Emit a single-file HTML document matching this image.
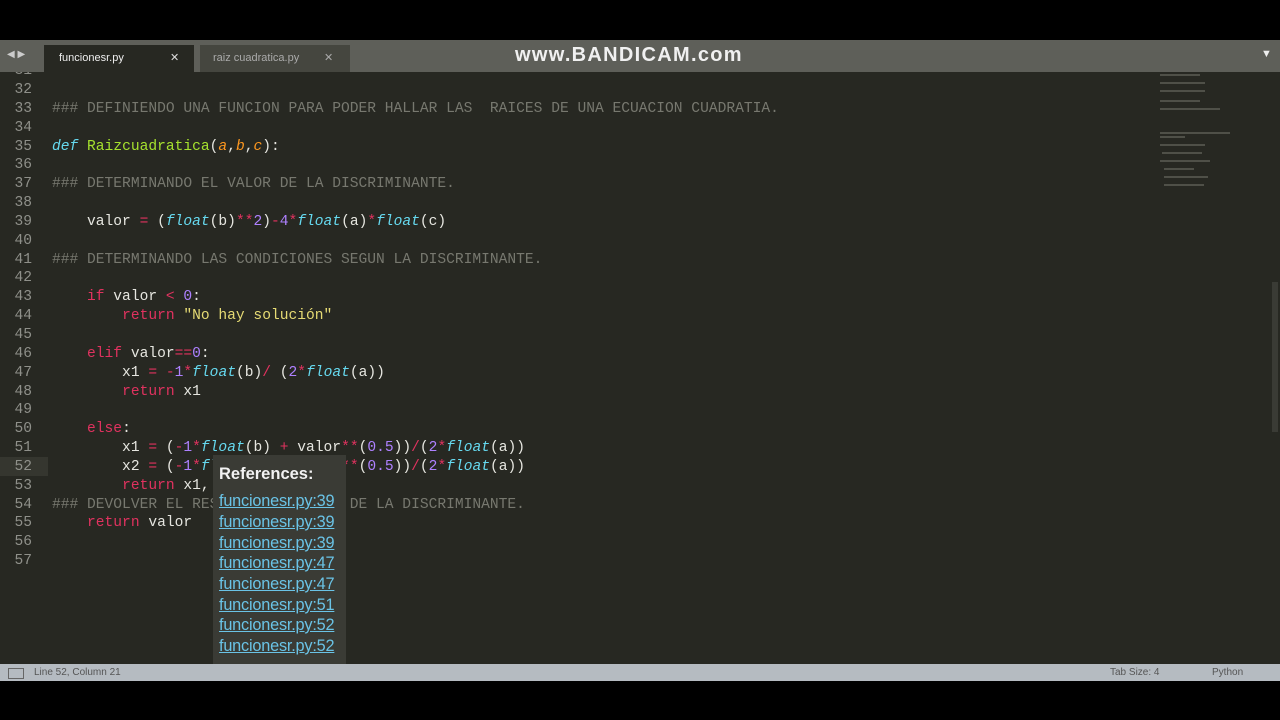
<!DOCTYPE html>
<html><head><meta charset="utf-8"><style>
body{margin:0;width:1280px;height:720px;background:#000;position:relative;overflow:hidden;font-family:"Liberation Sans",sans-serif}
#tabbar{position:absolute;top:40px;left:0;width:1280px;height:32px;background:#5e5f59}
.tab{position:absolute;top:5px;height:27px;font-size:11px;line-height:27px}
#ed{position:absolute;top:72px;left:0;width:1280px;height:592px;background:#272822;overflow:hidden}
#code{position:absolute;top:-9.8px;left:0;font-family:"Liberation Mono",monospace;font-size:14.6px;line-height:18.84px;white-space:pre;color:#e6e6e0}
.ln{display:inline-block;width:32px;text-align:right;color:#8f908a;margin-right:20px}
.c{color:#77786f}.k{color:#e0325f}.f{color:#a6e22e}.b{color:#66d9ef;font-style:italic}.o{color:#fd971f;font-style:italic}.n{color:#ae81ff}.s{color:#e6db74}
#status{position:absolute;top:664px;left:0;width:1280px;height:17px;background:#b5bbc1;font-size:10px;color:#555;line-height:17px}
#pop{position:absolute;top:455px;left:213px;width:133px;height:209px;background:#3a3b35}
#pop .h{color:#f2f2f2;font-weight:bold;font-size:16.5px;position:absolute;left:6px;top:10px}
#pop a{display:block;position:absolute;left:6px;color:#6ac3e6;text-decoration:underline;font-size:16.3px;letter-spacing:-0.2px}
.mm{position:absolute;height:2px;background:#6a6b63;opacity:.6}
</style></head><body>
<div id="tabbar">
<div style="position:absolute;left:7px;top:9px;color:#ccc;font-size:10px">◀ ▶</div>
<div class="tab" style="left:44px;width:150px;background:#272822;color:#eee"><span style="margin-left:15px">funcionesr.py</span><span style="position:absolute;left:126px;color:#ddd">✕</span></div>
<div class="tab" style="left:200px;width:150px;background:#45463f;color:#aaa"><span style="margin-left:13px">raiz cuadratica.py</span><span style="position:absolute;left:124px">✕</span></div>
<div style="position:absolute;left:515px;top:4px;font-size:20px;font-weight:bold;color:#f0f0f0;letter-spacing:1.3px">www.BANDICAM.com</div>
<div style="position:absolute;left:1261px;top:8px;color:#eee;font-size:11px">▼</div>
</div>
<div id="ed">
<div style="position:absolute;left:0;top:385px;width:48px;height:19px;background:#35362f"></div>
<div id="code"><span class="ln">31</span>
<span class="ln">32</span>
<span class="ln">33</span><span class="c">### DEFINIENDO UNA FUNCION PARA PODER HALLAR LAS  RAICES DE UNA ECUACION CUADRATIA.</span>
<span class="ln">34</span>
<span class="ln">35</span><span class="b">def</span> <span class="f">Raizcuadratica</span>(<span class="o">a</span>,<span class="o">b</span>,<span class="o">c</span>):
<span class="ln">36</span>
<span class="ln">37</span><span class="c">### DETERMINANDO EL VALOR DE LA DISCRIMINANTE.</span>
<span class="ln">38</span>
<span class="ln">39</span>    valor <span class="k">=</span> (<span class="b">float</span>(b)<span class="k">**</span><span class="n">2</span>)<span class="k">-</span><span class="n">4</span><span class="k">*</span><span class="b">float</span>(a)<span class="k">*</span><span class="b">float</span>(c)
<span class="ln">40</span>
<span class="ln">41</span><span class="c">### DETERMINANDO LAS CONDICIONES SEGUN LA DISCRIMINANTE.</span>
<span class="ln">42</span>
<span class="ln">43</span>    <span class="k">if</span> valor <span class="k">&lt;</span> <span class="n">0</span>:
<span class="ln">44</span>        <span class="k">return</span> <span class="s">"No hay solución"</span>
<span class="ln">45</span>
<span class="ln">46</span>    <span class="k">elif</span> valor<span class="k">==</span><span class="n">0</span>:
<span class="ln">47</span>        x1 <span class="k">=</span> <span class="k">-</span><span class="n">1</span><span class="k">*</span><span class="b">float</span>(b)<span class="k">/</span> (<span class="n">2</span><span class="k">*</span><span class="b">float</span>(a))
<span class="ln">48</span>        <span class="k">return</span> x1
<span class="ln">49</span>
<span class="ln">50</span>    <span class="k">else</span>:
<span class="ln">51</span>        x1 <span class="k">=</span> (<span class="k">-</span><span class="n">1</span><span class="k">*</span><span class="b">float</span>(b) <span class="k">+</span> valor<span class="k">**</span>(<span class="n">0.5</span>))<span class="k">/</span>(<span class="n">2</span><span class="k">*</span><span class="b">float</span>(a))
<span class="ln">52</span>        x2 <span class="k">=</span> (<span class="k">-</span><span class="n">1</span><span class="k">*</span><span class="b">float</span>(b) <span class="k">-</span> valor<span class="k">**</span>(<span class="n">0.5</span>))<span class="k">/</span>(<span class="n">2</span><span class="k">*</span><span class="b">float</span>(a))
<span class="ln">53</span>        <span class="k">return</span> x1, x2
<span class="ln">54</span><span class="c">### DEVOLVER EL RESULTADO DEPENDE DE LA DISCRIMINANTE.</span>
<span class="ln">55</span>    <span class="k">return</span> valor
<span class="ln">56</span>
<span class="ln">57</span>
</div>
<div class="mm" style="left:1160px;top:2px;width:40px"></div><div class="mm" style="left:1160px;top:10px;width:45px"></div>
<div class="mm" style="left:1160px;top:18px;width:45px"></div><div class="mm" style="left:1160px;top:28px;width:40px"></div>
<div class="mm" style="left:1160px;top:36px;width:60px"></div><div class="mm" style="left:1160px;top:60px;width:70px"></div>
<div class="mm" style="left:1160px;top:64px;width:25px"></div><div class="mm" style="left:1160px;top:72px;width:45px"></div>
<div class="mm" style="left:1162px;top:80px;width:40px"></div><div class="mm" style="left:1160px;top:88px;width:50px"></div>
<div class="mm" style="left:1164px;top:96px;width:30px"></div><div class="mm" style="left:1164px;top:104px;width:44px"></div>
<div class="mm" style="left:1164px;top:112px;width:40px"></div>
<div style="position:absolute;left:1272px;top:210px;width:6px;height:150px;background:#3a3b35"></div>
</div>
<div id="pop"><div class="h">References:</div>
<a style="top:37px">funcionesr.py:39</a><a style="top:58px">funcionesr.py:39</a><a style="top:79px">funcionesr.py:39</a><a style="top:99px">funcionesr.py:47</a><a style="top:120px">funcionesr.py:47</a><a style="top:141px">funcionesr.py:51</a><a style="top:161px">funcionesr.py:52</a><a style="top:182px">funcionesr.py:52</a></div>
<div id="status"><span style="position:absolute;left:8px;top:4px;width:14px;height:9px;border:1px solid #666"></span><span style="position:absolute;left:34px">Line 52, Column 21</span><span style="position:absolute;left:1110px">Tab Size: 4</span><span style="position:absolute;left:1212px">Python</span></div>
</body></html>
